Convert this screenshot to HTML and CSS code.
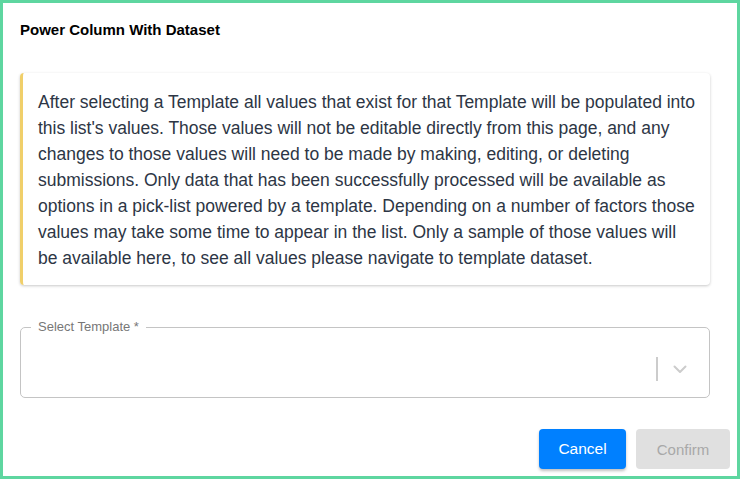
FILE: index.html
```html
<!DOCTYPE html>
<html>
<head>
<meta charset="utf-8">
<link rel="stylesheet" href="styles.css">
</head>
<body>
<div class="dialog">
  <h2 class="title">Power Column With Dataset</h2>
  <div class="alert">After selecting a Template all values that exist for that Template will be populated into this list's values. Those values will not be editable directly from this page, and any changes to those values will need to be made by making, editing, or deleting submissions. Only data that has been successfully processed will be available as options in a pick-list powered by a template. Depending on a number of factors those values may take some time to appear in the list. Only a sample of those values will be available here, to see all values please navigate to template dataset.</div>
  <fieldset class="select">
    <legend class="select-label">Select Template *</legend>
    <div class="select-row">
      <div class="select-value"></div>
      <span class="sep"></span>
      <svg class="chev" width="14" height="9" viewBox="0 0 14 9"><path d="M1.5 1.5 L7 7 L12.5 1.5" fill="none" stroke="#cccccc" stroke-width="2" stroke-linecap="round" stroke-linejoin="round"/></svg>
    </div>
  </fieldset>
  <div class="actions">
    <button class="btn btn-primary">Cancel</button>
    <button class="btn btn-disabled">Confirm</button>
  </div>
</div>
</body>
</html>
```
FILE: styles.css
```css
html, body {
  margin: 0;
  padding: 0;
  background: #ffffff;
}
.dialog {
  box-sizing: border-box;
  width: 740px;
  height: 479px;
  border: 3px solid #5ed6a0;
  padding: 17px 7px 0 17px;
  font-family: "Liberation Sans", Arial, sans-serif;
  display: flex;
  flex-direction: column;
}
.title {
  margin: 0;
  font-size: 15px;
  line-height: 20px;
  font-weight: bold;
  color: #000;
}
.alert {
  margin: 33px 20px 0 0;
  box-sizing: border-box;
  height: 212px;
  padding: 16px 12px 14px 15px;
  border-left: 3px solid #f0cf6a;
  border-radius: 4px;
  box-shadow: 0 1px 3px rgba(0, 0, 0, 0.22);
  font-size: 17.5px;
  line-height: 26px;
  color: #2d3645;
}
.select {
  margin: 35px 20px 0 0;
  padding: 0 22px 0 10px;
  border: 1px solid #c4c4c4;
  border-radius: 5px;
  height: 78px;
  box-sizing: border-box;
  min-width: 0;
}
.select-label {
  padding: 0 7px;
  font-size: 13px;
  line-height: 14px;
  color: #777;
}
.select-row {
  display: flex;
  align-items: center;
  height: 69px;
}
.select-value {
  flex: 1;
}
.sep {
  width: 2px;
  height: 24px;
  background: #cccccc;
  margin-right: 15px;
}
.chev {
  display: block;
  margin-top: 1px;
}
.actions {
  margin-top: 31px;
  display: flex;
  justify-content: flex-end;
  gap: 10px;
}
.btn {
  height: 40px;
  border: none;
  border-radius: 4px;
  font-family: "Liberation Sans", Arial, sans-serif;
  font-size: 15.5px;
  padding: 0;
}
.btn-primary {
  width: 87px;
  background: #0080ff;
  color: #fff;
  box-shadow: 0 2px 3px rgba(0, 0, 0, 0.25);
}
.btn-disabled {
  width: 94px;
  background: #e0e0e0;
  color: #a8a8a8;
  font-size: 15px;
}
```
